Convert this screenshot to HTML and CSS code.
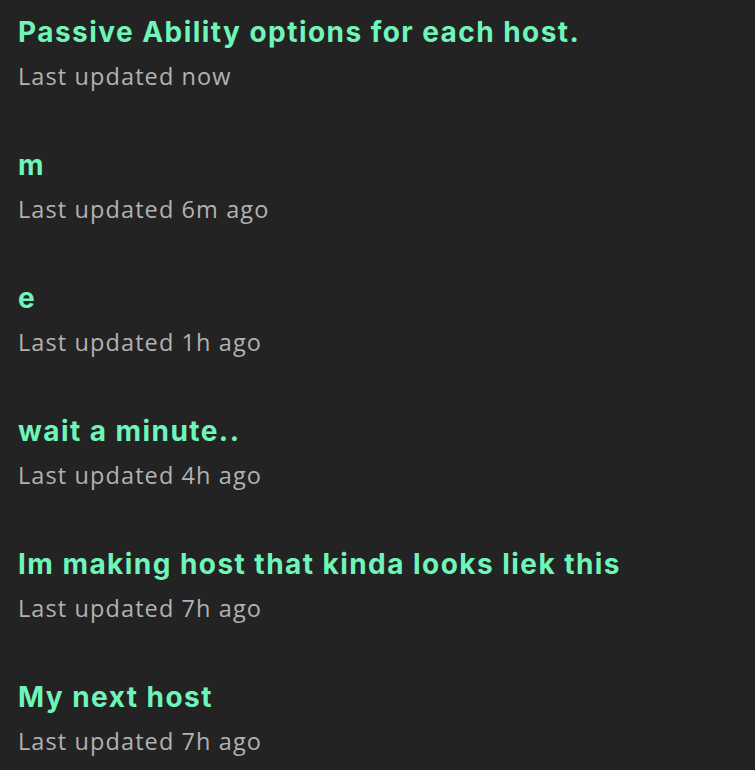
FILE: index.html
```html
<!DOCTYPE html>
<html>
<head>
<meta charset="utf-8">
<link rel="stylesheet" href="styles.css">
</head>
<body>
<ul class="list">
  <li class="item"><div class="title">Passive Ability options for each host.</div><div class="meta">Last updated now</div></li>
  <li class="item"><div class="title">m</div><div class="meta">Last updated 6m ago</div></li>
  <li class="item"><div class="title">e</div><div class="meta">Last updated 1h ago</div></li>
  <li class="item"><div class="title">wait a minute..</div><div class="meta">Last updated 4h ago</div></li>
  <li class="item"><div class="title">Im making host that kinda looks liek this</div><div class="meta">Last updated 7h ago</div></li>
  <li class="item"><div class="title">My next host</div><div class="meta">Last updated 7h ago</div></li>
</ul>
</body>
</html>
```
FILE: styles.css
```css
html, body {
  margin: 0;
  padding: 0;
  background: #232323;
  height: 100%;
  overflow: hidden;
}
body {
  font-family: Inter, "Noto Sans", sans-serif;
}
.list {
  list-style: none;
  margin: 0;
  padding: 10px 18px 0;
  display: flex;
  flex-direction: column;
}
.item {
  height: 133px;
  display: flex;
  flex-direction: column;
}
.title {
  color: #6ff5b9;
  font-weight: 700;
  font-size: 28px;
  line-height: 44px;
  letter-spacing: 1.45px;
}
.meta {
  color: #b2b2b2;
  font-family: "Open Sans", sans-serif;
  font-size: 23.5px;
  line-height: 44px;
  letter-spacing: 1.1px;
}
```
